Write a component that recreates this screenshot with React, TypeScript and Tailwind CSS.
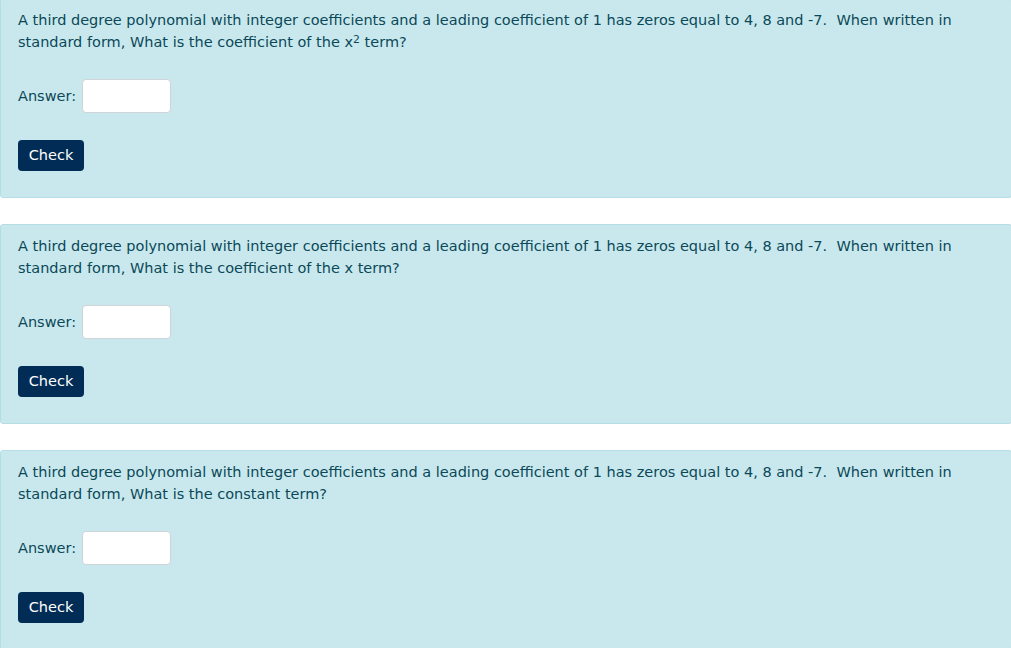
import React from "react";

type Question = {
  id: number;
  ask: React.ReactNode;
};

const questions: Question[] = [
  {
    id: 1,
    ask: (
      <>
        the coefficient of the x<sup className="relative -top-[0.4em] align-baseline text-[0.75em] leading-none">2</sup> term?
      </>
    ),
  },
  { id: 2, ask: <>the coefficient of the x term?</> },
  { id: 3, ask: <>the constant term?</> },
];

function QuestionPanel({ question, first }: { question: Question; first: boolean }) {
  return (
    <section
      className={`w-[1012px] rounded-[3px] border border-[#b5dde5] bg-[#c9e8ee] pl-[17px] pr-4 pt-[10px] pb-[26px] text-[#0b4858] ${
        first ? "-mt-[2px]" : "mt-[26px]"
      }`}
    >
      <p className="text-[14.5px] leading-[22px]">
        A third degree polynomial with integer coefficients and a leading coefficient of 1 has zeros equal to 4, 8 and
        -7.&nbsp; When written in standard form, What is {question.ask}
      </p>

      <div className="mt-[26px] flex items-center gap-[6px]">
        <label className="text-[14.5px] leading-[22px]" htmlFor={`answer-${question.id}`}>
          Answer:
        </label>
        <input
          id={`answer-${question.id}`}
          type="text"
          className="h-[34px] w-[89px] rounded-[4px] border border-[#cfd4d8] bg-white px-2 text-[14px] outline-none"
        />
      </div>

      <button
        type="button"
        className="mt-[27px] h-[31px] w-[66px] rounded-[4px] bg-[#002c55] text-[14.5px] text-white"
      >
        Check
      </button>
    </section>
  );
}

export default function App() {
  return (
    <div className="h-[648px] w-[1011px] overflow-hidden bg-white font-['DejaVu_Sans',Verdana,sans-serif]">
      {questions.map((question, index) => (
        <QuestionPanel key={question.id} question={question} first={index === 0} />
      ))}
    </div>
  );
}
